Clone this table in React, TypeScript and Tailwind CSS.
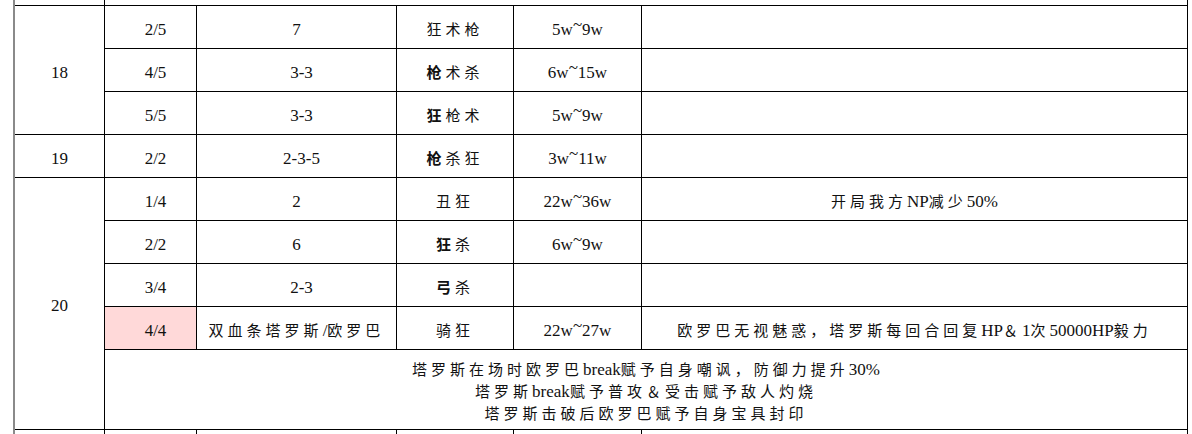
import React from 'react';

type Seg = string | { b: string };

const CJK_RE = /([\u2E80-\u9FFF\u3000-\u303F\uFF00-\uFFEF]+)/;
const CJK_TEST = /[\u2E80-\u9FFF\u3000-\u303F\uFF00-\uFFEF]/;

function Txt({ s }: { s: Seg[] | string }) {
  const segs: Seg[] = typeof s === 'string' ? [s] : s;
  const out: React.ReactNode[] = [];
  segs.forEach((seg, i) => {
    const bold = typeof seg !== 'string';
    const str = typeof seg === 'string' ? seg : seg.b;
    str.split(CJK_RE).forEach((p, j) => {
      if (!p) return;
      if (CJK_TEST.test(p)) {
        out.push(
          <span
            key={`${i}-${j}`}
            className={
              bold
                ? "font-['Noto_Sans_CJK_SC',sans-serif] text-[15px] tracking-[4px] font-bold"
                : "font-['Noto_Sans_CJK_SC',sans-serif] text-[15px] tracking-[4px]"
            }
          >
            {p}
          </span>
        );
      } else {
        p.split(/(~)/).forEach((q, k) => {
          if (!q) return;
          if (q === '~') {
            out.push(
              <span key={`${i}-${j}-${k}`} className="inline-block -translate-y-[5px] font-['Liberation_Serif',serif] text-[17px]">
                ~
              </span>
            );
          } else {
            out.push(
              <span key={`${i}-${j}-${k}`} className="font-['Liberation_Serif',serif] text-[17px]">
                {q}
              </span>
            );
          }
        });
      }
    });
  });
  return <>{out}</>;
}

type Row = [string, string, Seg[] | string, string, string];

const groups: { label: string; notes?: string[]; rows: Row[]; pink?: number }[] = [
  {
    label: '18',
    rows: [
      ['2/5', '7', '狂术枪', '5w~9w', ''],
      ['4/5', '3-3', [{ b: '枪' }, '术杀'], '6w~15w', ''],
      ['5/5', '3-3', [{ b: '狂' }, '枪术'], '5w~9w', ''],
    ],
  },
  {
    label: '19',
    rows: [['2/2', '2-3-5', [{ b: '枪' }, '杀狂'], '3w~11w', '']],
  },
  {
    label: '20',
    pink: 3,
    rows: [
      ['1/4', '2', '丑狂', '22w~36w', '开局我方NP减少50%'],
      ['2/2', '6', [{ b: '狂' }, '杀'], '6w~9w', ''],
      ['3/4', '2-3', [{ b: '弓' }, '杀'], '', ''],
      ['4/4', '双血条塔罗斯/欧罗巴', '骑狂', '22w~27w', '欧罗巴无视魅惑，塔罗斯每回合回复HP＆1次50000HP毅力'],
    ],
    notes: [
      '塔罗斯在场时欧罗巴break赋予自身嘲讽，防御力提升30%',
      '塔罗斯break赋予普攻＆受击赋予敌人灼烧',
      '塔罗斯击破后欧罗巴赋予自身宝具封印',
    ],
  },
];

const cell = 'bg-white flex items-center justify-center pt-[5px] text-[#111] whitespace-nowrap';

export default function App() {
  return (
    <div className="h-[434px] w-[1192px] overflow-hidden bg-white">
      <div className="ml-[13px] w-[1175px] border-l-2 border-r border-l-[#8a8a8a] border-r-black bg-black grid grid-cols-[89px_91px_199px_116px_127px_545px] grid-rows-[5px_repeat(8,42px)_79px_40px] gap-px">
        {/* partial previous row */}
        <div className="bg-white" />
        <div className="bg-white col-span-5" />

        {groups.map((g) => (
          <React.Fragment key={g.label}>
            <div
              className={
                g.notes
                  ? `${cell} row-span-5`
                  : g.rows.length === 3
                  ? `${cell} row-span-3`
                  : cell
              }
            >
              <Txt s={g.label} />
            </div>
            {g.rows.map((r, ri) => (
              <React.Fragment key={ri}>
                <div className={g.pink === ri ? `${cell} pl-[10px] !bg-[#ffd9d9]` : `${cell} pl-[10px]`}>
                  <Txt s={r[0]} />
                </div>
                <div className={r[1].includes('-') ? `${cell} pl-[10px]` : cell}>
                  <Txt s={r[1]} />
                </div>
                <div className={cell}>
                  <Txt s={r[2]} />
                </div>
                <div className={cell}>
                  <Txt s={r[3]} />
                </div>
                <div className={cell}>
                  <Txt s={r[4]} />
                </div>
              </React.Fragment>
            ))}
            {g.notes && (
              <div className="bg-white col-span-5 flex flex-col items-center justify-center pt-[2px] text-[#111] leading-[21px] whitespace-nowrap">
                {g.notes.map((n) => (
                  <div key={n}>
                    <Txt s={n} />
                  </div>
                ))}
              </div>
            )}
          </React.Fragment>
        ))}

        {/* next row (partially visible) */}
        <div className="bg-white" />
        <div className="bg-white" />
        <div className="bg-white" />
        <div className="bg-white" />
        <div className="bg-white" />
        <div className="bg-white" />
      </div>
    </div>
  );
}
